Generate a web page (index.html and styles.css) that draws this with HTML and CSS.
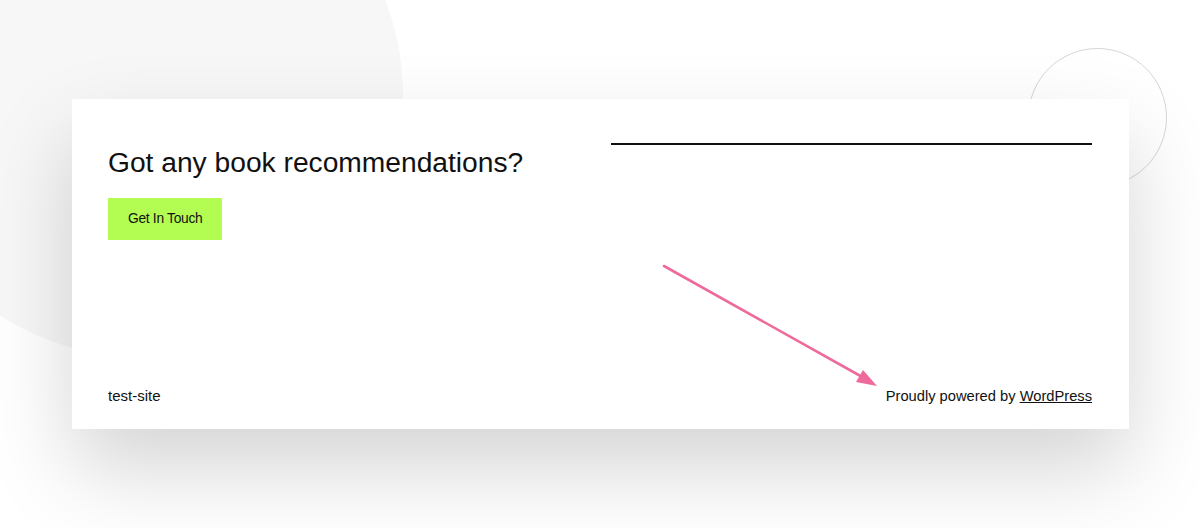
FILE: index.html
```html
<!DOCTYPE html>
<html lang="en">
<head>
<meta charset="utf-8">
<title>test-site</title>
<link rel="stylesheet" href="styles.css">
</head>
<body>
<div class="page">
  <div class="blob"></div>
  <div class="ring"></div>
  <main class="card">
    <div class="top">
      <div class="cta">
        <h2 class="title">Got any book recommendations?</h2>
        <a class="button" href="#">Get In Touch</a>
      </div>
      <div class="rule"></div>
    </div>
    <footer class="footer">
      <span class="site">test-site</span>
      <span class="credit">Proudly powered by <a href="#">WordPress</a></span>
    </footer>
  </main>
  <svg class="arrow" width="1200" height="528" viewBox="0 0 1200 528">
    <line x1="664" y1="266" x2="864" y2="378" stroke="#ee6a9c" stroke-width="2.6" stroke-linecap="round"/>
    <polygon points="877,386 856,382 863,370" fill="#ee6a9c"/>
  </svg>
</div>
</body>
</html>
```

FILE: styles.css
```css
html, body {
  margin: 0;
  padding: 0;
  background: #ffffff;
}
body {
  font-family: "Liberation Sans", Arial, sans-serif;
  color: #111111;
}
.page {
  position: relative;
  width: 1200px;
  height: 528px;
  overflow: hidden;
  padding-top: 99px;
  box-sizing: border-box;
}
.blob {
  position: absolute;
  left: -121px;
  top: -167px;
  width: 524px;
  height: 524px;
  border-radius: 50%;
  background: #f7f7f8;
}
.ring {
  position: absolute;
  left: 1028px;
  top: 48px;
  width: 137px;
  height: 137px;
  border-radius: 50%;
  border: 1px solid #d6d6d6;
}
.card {
  position: relative;
  margin-left: 72px;
  width: 1057px;
  height: 330px;
  box-sizing: border-box;
  padding: 44px 37px 24px 36px;
  background: #ffffff;
  box-shadow: 0 40px 80px rgba(0, 0, 0, 0.17);
  display: flex;
  flex-direction: column;
}
.top {
  display: grid;
  grid-template-columns: 1fr 481px;
  column-gap: 22px;
}
.title {
  margin: 3px 0 0;
  font-size: 28.2px;
  font-weight: 400;
  line-height: 1.2;
  color: #111;
}
.button {
  display: inline-block;
  margin-top: 18px;
  padding: 13px 20px;
  background: #b3fc52;
  color: #111;
  font-size: 13.8px;
  letter-spacing: -0.3px;
  line-height: 16px;
  text-decoration: none;
}
.rule {
  height: 0;
  border-top: 2px solid #111;
}
.footer {
  margin-top: auto;
  display: flex;
  justify-content: space-between;
  align-items: baseline;
  font-size: 14.7px;
  line-height: 18px;
}
.site {
  font-size: 15px;
}
.credit a {
  color: #111;
  text-decoration: underline;
}
.arrow {
  position: absolute;
  left: 0;
  top: 0;
  pointer-events: none;
}
```
